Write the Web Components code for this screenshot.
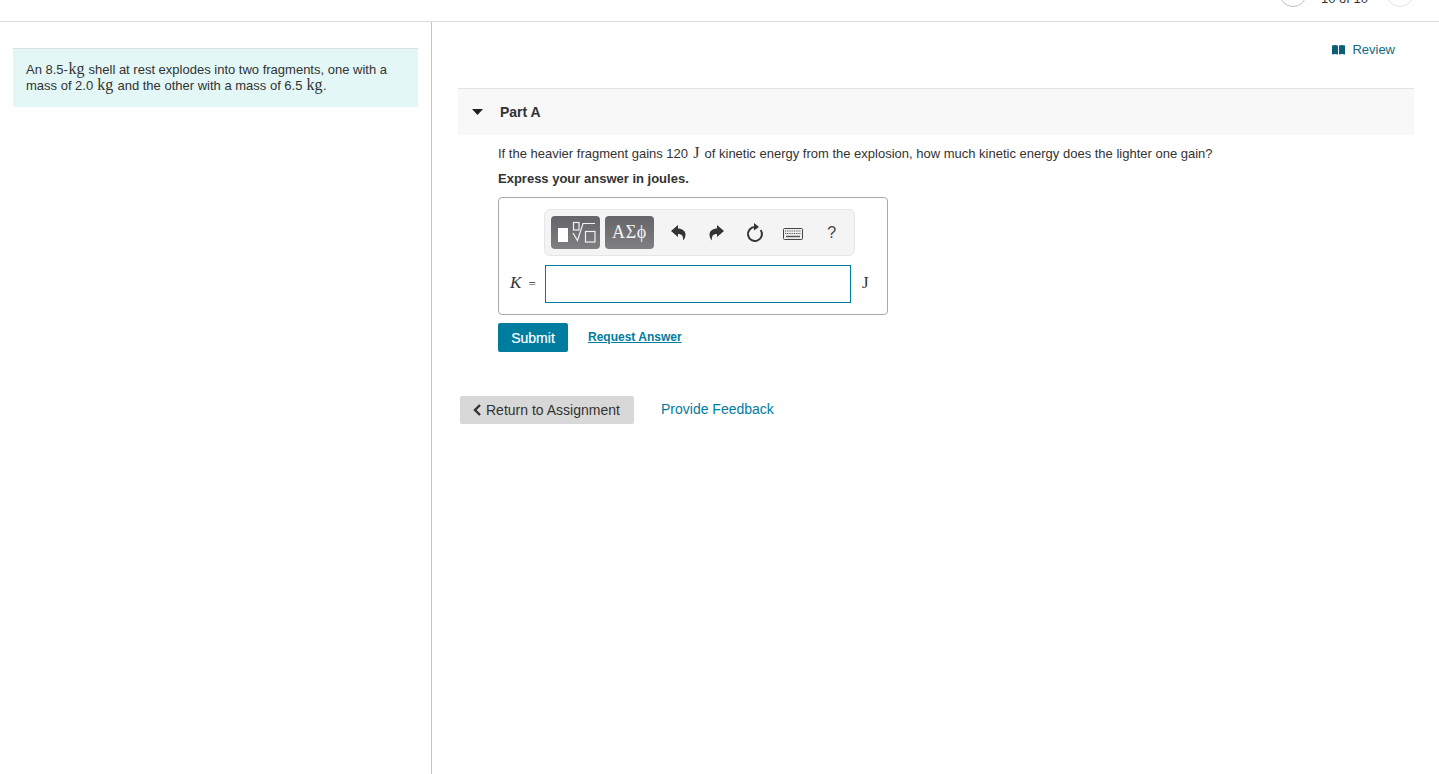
<!DOCTYPE html>
<html>
<head>
<meta charset="utf-8">
<title>Part A</title>
<style>
  html, body { margin: 0; height: 774px; overflow: hidden; background: #fff; }
  body { font-family: "Liberation Sans", Arial, sans-serif; font-size: 13px; color: #333; }
</style>
</head>
<body>
<quiz-page>
  <top-bar slot="top"></top-bar>
  <intro-box slot="side">An 8.5-<m-t>kg</m-t> shell at rest explodes into two fragments, one with a mass of 2.0 <m-t>kg</m-t> and the other with a mass of 6.5 <m-t>kg</m-t>.</intro-box>
  <review-link slot="main"></review-link>
  <part-panel slot="main" title-text="Part A">
    <p>If the heavier fragment gains 120 <m-t style="padding:0 1.5px">J</m-t> of kinetic energy from the explosion, how much kinetic energy does the lighter one gain?</p>
    <p class="hint"><b>Express your answer in joules.</b></p>
    <answer-box></answer-box>
    <answer-actions></answer-actions>
  </part-panel>
  <page-footer slot="main"></page-footer>
</quiz-page>

<script>
class MT extends HTMLElement {
  constructor() {
    super();
    this.attachShadow({mode: "open"}).innerHTML = `<style>
      :host { display: inline; font-family: "Liberation Serif", "Times New Roman", serif; font-size: 16px; line-height: 0; padding: 0 .5px; }
    </style><slot></slot>`;
  }
}
customElements.define("m-t", MT);

class QuizPage extends HTMLElement {
  constructor() {
    super();
    this.attachShadow({mode: "open"}).innerHTML = `
    <style>
      :host { display: block; height: 774px; }
      .body { display: grid; grid-template-columns: 432px 1fr; height: 752px; }
      .side { border-right: 1px solid #c4c4c4; padding: 26px 13px 0 13px; }
      .main { padding: 0 25px 0 26px; }
    </style>
    <slot name="top"></slot>
    <div class="body">
      <div class="side"><slot name="side"></slot></div>
      <div class="main"><slot name="main"></slot></div>
    </div>`;
  }
}
customElements.define("quiz-page", QuizPage);

class TopBar extends HTMLElement {
  constructor() {
    super();
    this.attachShadow({mode: "open"}).innerHTML = `
    <style>
      :host { display: flex; justify-content: flex-end; align-items: flex-end; height: 21px; border-bottom: 1px solid #dcdcdc; overflow: hidden; }
      .pager { display: flex; align-items: flex-end; gap: 14px; padding: 0 25px 14px 0; }
      .c { width: 26px; height: 26px; border: 1px solid #c0c0c0; border-radius: 50%; background: #fff; }
      .c.off { border-color: #e4e4e4; }
      span { width: 51px; font-size: 13px; line-height: 15px; margin-bottom: 1px; color: #333; white-space: nowrap; }
    </style>
    <div class="pager">
      <div class="c"></div>
      <span>10 of 10</span>
      <div class="c off"></div>
    </div>`;
  }
}
customElements.define("top-bar", TopBar);

class IntroBox extends HTMLElement {
  constructor() {
    super();
    this.attachShadow({mode: "open"}).innerHTML = `
    <style>
      :host { display: block; background: #e2f7f6; border-top: 1px solid #d9dfe3; padding: 13px; line-height: 16px; width: 379px; color: #333; }
    </style>
    <slot></slot>`;
  }
}
customElements.define("intro-box", IntroBox);

class ReviewLink extends HTMLElement {
  constructor() {
    super();
    this.attachShadow({mode: "open"}).innerHTML = `
    <style>
      :host { display: flex; justify-content: flex-end; align-items: center; gap: 7px; height: 15px; padding: 20px 19px 31px 0; color: #0f6b85; font-size: 13px; }
      svg { display: block; }
    </style>
    <svg width="13" height="10" viewBox="0 0 13 10"><path d="M0 .5q3-.8 6 0v9q-3-.8-6 0zM7 .5q3-.8 6 0v9q-3-.8-6 0z" fill="#0d5f78"/></svg>
    <span>Review</span>`;
  }
}
customElements.define("review-link", ReviewLink);

class PartPanel extends HTMLElement {
  constructor() {
    super();
    this.attachShadow({mode: "open"}).innerHTML = `
    <style>
      :host { display: block; }
      .head { display: flex; align-items: center; height: 46px; background: #f8f8f8; border-top: 1px solid #e2e2e2; font-weight: bold; font-size: 14px; color: #333; padding-left: 14px; }
      svg { margin-right: 17px; display: block; }
      .content { padding: 11px 0 0 40px; }
      ::slotted(p) { margin: 0 0 9px 0; line-height: 16px; color: #333; }
    </style>
    <div class="head">
      <svg width="11" height="6" viewBox="0 0 11 6"><path d="M0 0h11L5.500 6z" fill="#222"/></svg>
      <span>${this.getAttribute("title-text")}</span>
    </div>
    <div class="content"><slot></slot></div>`;
  }
}
customElements.define("part-panel", PartPanel);

class MathToolbar extends HTMLElement {
  constructor() {
    super();
    this.attachShadow({mode: "open"}).innerHTML = `
    <style>
      :host { display: flex; align-items: center; box-sizing: border-box; width: 311px; height: 47px; background: #f4f4f4; border: 1px solid #e6e6e6; border-radius: 6px; padding-left: 6px; }
      .btn { display: flex; align-items: center; justify-content: center; box-sizing: border-box; height: 33px; border-radius: 4px; background: linear-gradient(#656569, #7f7f82); color: #f2f2f2; }
      .a { width: 49px; margin-right: 5px; }
      .b { width: 49px; font-family: "Liberation Serif", serif; font-size: 18px; letter-spacing: .6px; }
      .tools { display: flex; align-items: center; margin-left: 5px; }
      .tool { display: flex; justify-content: center; width: 38.4px; }
      .kb { margin-top: 3px; }
      .q { font-size: 16px; color: #444; line-height: 16px; }
      svg { display: block; }
    </style>
    <div class="btn a">
      <svg width="49" height="33" viewBox="0 0 49 33">
        <rect x="7" y="12" width="10" height="14" fill="#fff"/>
        <rect x="22.500" y="6.500" width="5.500" height="7.500" fill="none" stroke="#f2f2f2" stroke-width="1.200"/>
        <path d="M22 17l4.500 7.500L32 7.500h12" fill="none" stroke="#f2f2f2" stroke-width="1.200"/>
        <rect x="34.500" y="15.500" width="9.500" height="10.500" fill="none" stroke="#f2f2f2" stroke-width="1.200"/>
      </svg>
    </div>
    <div class="btn b">ΑΣϕ</div>
    <div class="tools">
      <div class="tool"><svg width="15" height="17" viewBox="0 0 15 17"><path d="M0 7L7 1v3.500c4 0 7.500 2.500 7.500 6 0 2.500-1 4.500-2.500 6 .5-4.500-1-6.500-5-6.500v3z" fill="#333"/></svg></div>
      <div class="tool"><svg width="15" height="17" viewBox="0 0 15 17"><path d="M15 7L8 1v3.500c-4 0-7.500 2.500-7.500 6 0 2.500 1 4.500 2.500 6-.5-4.500 1-6.500 5-6.500v3z" fill="#333"/></svg></div>
      <div class="tool"><svg width="18" height="20" viewBox="0 0 18 20"><path d="M9 4A7 7 0 1 0 14.700 7" fill="none" stroke="#333" stroke-width="2"/><path d="M8 0l5 4-5 3.500z" fill="#333"/></svg></div>
      <div class="tool kb"><svg width="20" height="12" viewBox="0 0 20 12"><rect x=".5" y=".5" width="19" height="11" rx="1" fill="#eee" stroke="#444"/><path d="M2 3h16M2 5.500h16" stroke="#555" stroke-width="1.200" stroke-dasharray="1 .8"/><path d="M3 8.500h14" stroke="#555" stroke-width="1.400"/></svg></div>
      <div class="tool q">?</div>
    </div>`;
  }
}
customElements.define("math-toolbar", MathToolbar);

class AnswerBox extends HTMLElement {
  constructor() {
    super();
    this.attachShadow({mode: "open"}).innerHTML = `
    <style>
      :host { display: block; box-sizing: border-box; width: 390px; height: 118px; border: 1px solid #a9a9a9; border-radius: 4px; padding: 11px 0 0 45px; margin-top: 10px; }
      .row { display: flex; align-items: center; margin: 9px 0 0 -34px; height: 38px; }
      .label { width: 35px; color: #333; font-family: "Liberation Serif", serif; font-size: 17px; white-space: nowrap; position: relative; top: -1px; }
      .label i { margin-right: 3px; }
      .label span { font-size: 13px; }
      .input { box-sizing: border-box; width: 306px; height: 38px; border: 1px solid #007c9e; background: #fff; }
      .unit { margin-left: 11px; font-family: "Liberation Serif", serif; font-size: 17px; color: #333; position: relative; top: -1px; }
    </style>
    <math-toolbar></math-toolbar>
    <div class="row">
      <div class="label"><i>K</i> <span>=</span></div>
      <div class="input"></div>
      <div class="unit">J</div>
    </div>`;
  }
}
customElements.define("answer-box", AnswerBox);

class AnswerActions extends HTMLElement {
  constructor() {
    super();
    this.attachShadow({mode: "open"}).innerHTML = `
    <style>
      :host { display: flex; align-items: center; margin-top: 8px; gap: 20px; }
      .submit { display: flex; align-items: center; justify-content: center; width: 70px; height: 29px; background: #007c9e; color: #fff; border-radius: 2px; font-size: 14px; -webkit-text-stroke: .2px #fff; }
      a { color: #007c9e; font-weight: bold; font-size: 12px; text-decoration: underline; position: relative; top: -1px; }
    </style>
    <div class="submit">Submit</div>
    <a>Request Answer</a>`;
  }
}
customElements.define("answer-actions", AnswerActions);

class PageFooter extends HTMLElement {
  constructor() {
    super();
    this.attachShadow({mode: "open"}).innerHTML = `
    <style>
      :host { display: flex; align-items: center; margin: 44px 0 0 2px; gap: 27px; font-size: 14px; }
      .back { display: flex; align-items: center; gap: 4px; box-sizing: border-box; width: 174px; height: 28px; padding-left: 13px; background: #d8d8d8; border-radius: 2px; color: #333; }
      a { color: #007c9e; position: relative; top: -1px; }
      svg { display: block; }
    </style>
    <div class="back">
      <svg width="9" height="12" viewBox="0 0 9 12"><path d="M7 1L2 6l5 5" fill="none" stroke="#333" stroke-width="2.400"/></svg>
      <span>Return to Assignment</span>
    </div>
    <a>Provide Feedback</a>`;
  }
}
customElements.define("page-footer", PageFooter);
</script>
</body>
</html>
